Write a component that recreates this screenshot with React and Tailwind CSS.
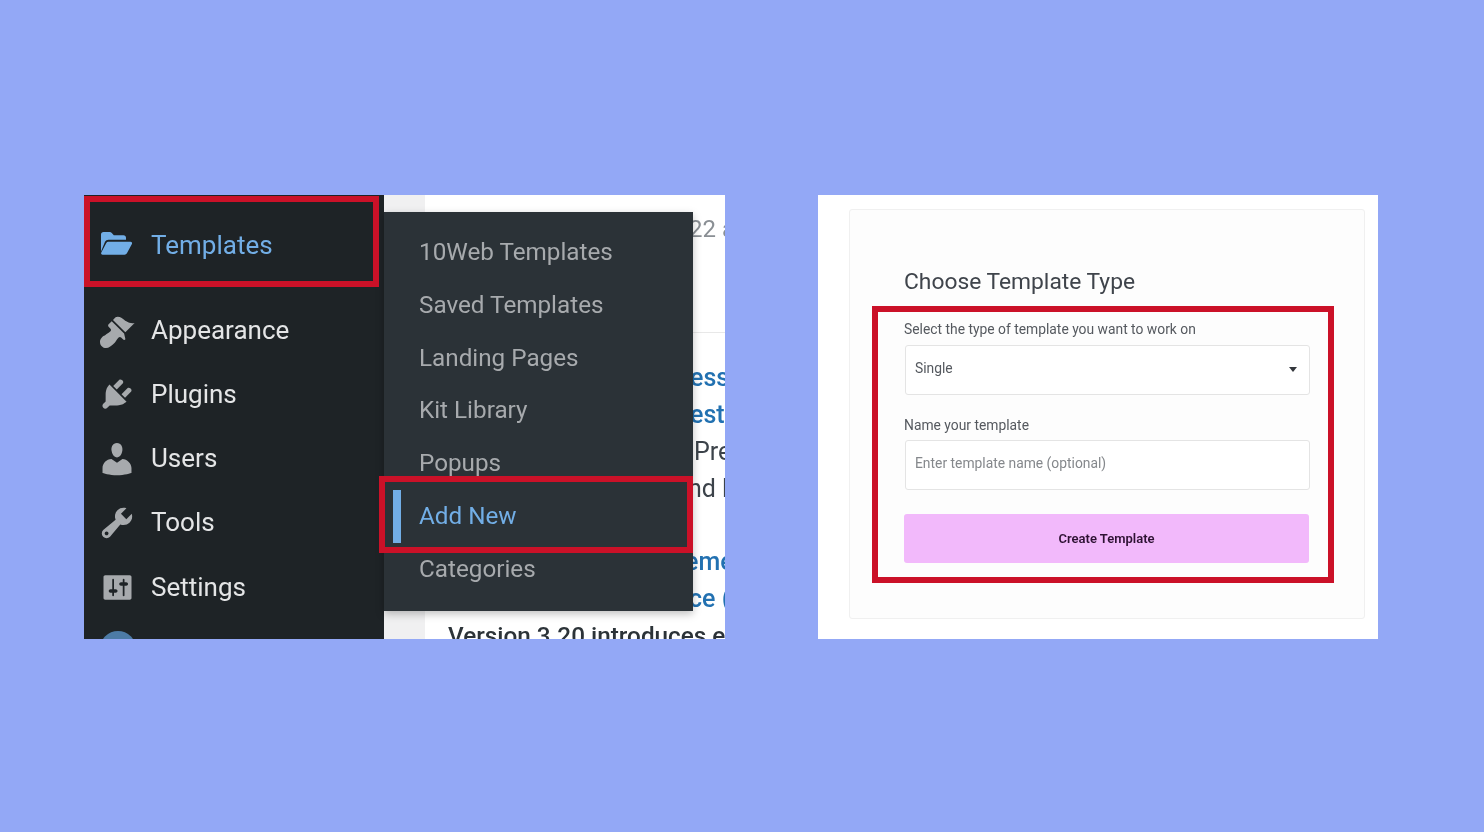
const paths = {
  appearance: "M14.48 11.06L7.41 3.99l1.5-1.5c.5-.56 2.3-.47 3.51.32 1.21.8 1.43 1.28 2.91 2.1 1.18.64 2.45 1.26 4.45.85zm-.71.71L6.7 4.7 4.93 6.47c-.39.39-.39 1.02 0 1.41l1.06 1.06c.39.39.39 1.03 0 1.42-.6.6-1.43 1.11-2.21 1.69-.35.26-.7.53-1.01.84C1.43 13.23 0 15 0 16.5 0 18.43 1.57 20 3.5 20c1.5 0 3.27-1.43 4.61-2.77.31-.31.58-.66.84-1.01.58-.78 1.09-1.61 1.69-2.21.39-.39 1.03-.39 1.42 0l1.06 1.06c.39.39 1.02.39 1.41 0z",
  plugins: "M13.11 4.36L9.87 7.6 8 5.73l3.24-3.24c.35-.34 1.05-.2 1.56.32.52.51.66 1.21.31 1.55zm-8 1.77l.91-1.12 9.01 9.01-1.19.84c-.71.71-2.63 1.16-3.82 1.16H6.14L4.9 17.26c-.59.59-1.54.59-2.12 0-.59-.58-.59-1.53 0-2.12l1.24-1.24v-3.88c0-1.13.4-3.19 1.09-3.89zm7.26 3.97l3.24-3.24c.34-.35 1.04-.21 1.55.31.52.51.66 1.21.31 1.55l-3.24 3.25z",
  users: "M10 9.25c-2.27 0-2.73-3.44-2.73-3.44C7 4.02 7.82 2 9.97 2c2.16 0 2.98 2.02 2.71 3.81 0 0-.41 3.44-2.68 3.44zm0 2.57L12.72 10c2.39 0 4.52 2.33 4.52 4.53v2.49s-3.65 1.13-7.24 1.13c-3.65 0-7.24-1.13-7.24-1.13v-2.49c0-2.25 1.94-4.48 4.47-4.48z",
  tools: "M16.68 9.77c-1.34 1.34-3.3 1.67-4.95.99l-5.41 6.52c-.99.99-2.59.99-3.58 0s-.99-2.59 0-3.57l6.52-5.42c-.68-1.65-.35-3.61.99-4.95 1.28-1.28 3.12-1.62 4.72-1.06l-2.89 2.89 2.82 2.82 2.86-2.87c.53 1.58.18 3.39-1.08 4.65zM3.81 16.21c.4.39 1.04.39 1.43 0 .4-.4.4-1.04 0-1.43-.39-.4-1.03-.4-1.43 0-.39.39-.39 1.03 0 1.43z",
  settings: "M18 16V4c0-.55-.45-1-1-1H3c-.55 0-1 .45-1 1v12c0 .55.45 1 1 1h14c.55 0 1-.45 1-1zM8 11h1c.55 0 1 .45 1 1s-.45 1-1 1H8v1.5c0 .28-.22.5-.5.5s-.5-.22-.5-.5V13H6c-.55 0-1-.45-1-1s.45-1 1-1h1V5.5c0-.28.22-.5.5-.5s.5.22.5.5V11zm5-2h-1c-.55 0-1-.45-1-1s.45-1 1-1h1V5.5c0-.28.22-.5.5-.5s.5.22.5.5V7h1c.55 0 1 .45 1 1s-.45 1-1 1h-1v5.5c0 .28-.22.5-.5.5s-.5-.22-.5-.5V9z",
};

function Dash({ name, size }) {
  return (
    <span className="flex h-[40px] w-[40px] shrink-0 items-center justify-center">
      <svg viewBox="0 0 20 20" className={size + " shrink-0 fill-[#a7aaad]"}>
        <path d={paths[name]} />
      </svg>
    </span>
  );
}

function Folder() {
  return (
    <svg viewBox="0 0 34 26" className="mb-[4px] h-[26px] w-[34px] shrink-0 fill-[#72aee6]">
      <path d="M2 20.5V3.5C2 2 3 1 4.5 1h6.2c.9 0 1.5.3 2.1 1l2 2.2h9.7c1.5 0 2.5 1 2.5 2.5v2H9.500c-1.600 0-2.700.7-3.500 2z" />
      <path d="M9.800 10.700h21.700c1.300 0 2 1.100 1.400 2.200l-5 9.400c-.5.900-1.300 1.400-2.400 1.400H3.700c-1.300 0-2-1.100-1.400-2.200l5-9.400c.5-.9 1.400-1.400 2.500-1.400z" />
    </svg>
  );
}

const sideItems = [
  ["Appearance", "appearance", "h-[35px] w-[35px]"],
  ["Plugins", "plugins", "h-[38px] w-[38px]"],
  ["Users", "users", "h-[40px] w-[40px]"],
  ["Tools", "tools", "h-[38px] w-[38px]"],
  ["Settings", "settings", "h-[35px] w-[35px]"],
];

const subItems = ["10Web Templates", "Saved Templates", "Landing Pages", "Kit Library", "Popups", "Add New", "Categories"];

function WpPanel() {
  return (
    <div className="relative flex h-[444px] w-[641px] shrink-0 overflow-hidden bg-white">
      <aside className="flex w-[300px] shrink-0 flex-col bg-[#1e2326]">
        <div className="flex h-[91px] shrink-0 items-center gap-[18px] pl-[15px] pt-[10px] text-[26px] text-[#72aee6]">
          <Folder />
          <span>Templates</span>
        </div>
        <div className="flex shrink-0 flex-col pt-[12px]">
          {sideItems.map(([label, icon, size]) => (
            <div key={label} className="flex h-[64.250px] shrink-0 items-center gap-[14px] pl-[13px] text-[26px] text-[#e4e5e6]">
              <Dash name={icon} size={size} />
              <span>{label}</span>
            </div>
          ))}
        </div>
        <div className="ml-[16px] mt-[12px] h-[36px] w-[36px] shrink-0 rounded-full bg-[#4d7ba6]" />
      </aside>

      <div className="w-[41px] shrink-0 bg-[#f0f0f1]" />

      <div className="flex min-w-0 flex-1 flex-col overflow-hidden whitespace-nowrap text-[25px] leading-[37px]">
        <div className="h-[138px] shrink-0 border-b border-[#e8e8e8] pl-[264px] pt-[16px] text-[24px] text-[#8a8f94]">22 a</div>
        <div className="shrink-0 pl-[265px] pt-[26px] font-medium text-[#2271b1]">ess</div>
        <div className="shrink-0 pl-[265px] font-medium text-[#2271b1]">est</div>
        <div className="shrink-0 pl-[263px] text-[#3c434a]">lPre</div>
        <div className="shrink-0 pl-[263px] text-[#3c434a]">nd l</div>
        <div className="shrink-0 pl-[260px] pt-[36px] font-medium text-[#2271b1]">eme</div>
        <div className="shrink-0 pl-[264px] font-medium text-[#2271b1]">ce (</div>
        <div className="shrink-0 pl-[23px] text-[24.300px] font-medium text-[#2c3338]">Version 3.20 introduces e</div>
      </div>

      <div className="absolute left-[300px] top-[17px] flex h-[399px] w-[309px] flex-col bg-[#2b3237] pt-[14px] shadow-[0_3px_8px_rgba(0,0,0,0.25)]">
        {subItems.map((label) => (
          <div
            key={label}
            className={
              label === "Add New"
                ? "relative flex h-[52.750px] shrink-0 items-center pl-[35px] text-[24.250px] text-[#72aee6]"
                : "flex h-[52.750px] shrink-0 items-center pl-[35px] text-[24.250px] text-[#a7aaad]"
            }
          >
            {label === "Add New" && <span className="absolute left-[9px] top-0 h-[53px] w-[8px] bg-[#72aee6]" />}
            {label}
          </div>
        ))}
      </div>

      <div className="absolute left-0 top-px h-[91px] w-[295px] border-[6px] border-[#cb1128]" />
      <div className="absolute left-[295px] top-[281px] h-[77px] w-[314px] border-[6px] border-[#cb1128]" />
    </div>
  );
}

function FormPanel() {
  return (
    <div className="flex h-[444px] w-[560px] shrink-0 bg-white pb-[20px] pl-[31px] pr-[13px] pt-[14px]">
      <div className="relative flex flex-1 flex-col rounded-[3px] border border-[#f0f0f0] bg-[#fdfdfd] pl-[54px] pr-[55px] pt-[57px]">
        <h2 className="text-[22.800px] leading-[30px] font-normal text-[#3f444b]">Choose Template Type</h2>
        <label className="mt-[23px] text-[13.850px] leading-[18px] text-[#55595f]">Select the type of template you want to work on</label>
        <div className="-mr-px ml-px mt-[7px] flex h-[50px] items-center justify-between rounded-[3px] border border-[#e4e4e4] bg-white pb-[3px] pl-[9px] pr-[12px] text-[13.850px] text-[#55595f]">
          <span>Single</span>
          <span className="mt-[2px] h-0 w-0 border-x-[4.500px] border-t-[5px] border-x-transparent border-t-[#33373c]" />
        </div>
        <label className="mt-[21px] text-[13.850px] leading-[18px] text-[#55595f]">Name your template</label>
        <div className="-mr-px ml-px mt-[6px] flex h-[50px] items-center rounded-[3px] border border-[#e4e4e4] bg-white pb-[3px] pl-[9px] text-[13.850px] text-[#85888c]">
          Enter template name (optional)
        </div>
        <button className="mt-[24px] h-[49px] rounded-[3px] bg-[#f2b9fb] text-center text-[13px] font-semibold text-[#2e1233]">
          Create Template
        </button>
        <div className="absolute left-[22px] top-[96px] h-[277px] w-[462px] border-[6px] border-[#cb1128]" />
      </div>
    </div>
  );
}

export default function App() {
  return (
    <div className="h-[835px] w-[1484px] overflow-hidden bg-white font-['Roboto',sans-serif]">
      <div className="flex h-[832px] items-start gap-[93px] bg-[#93a8f6] pl-[84px] pt-[195px] blur-[0.35px]">
        <WpPanel />
        <FormPanel />
      </div>
    </div>
  );
}
